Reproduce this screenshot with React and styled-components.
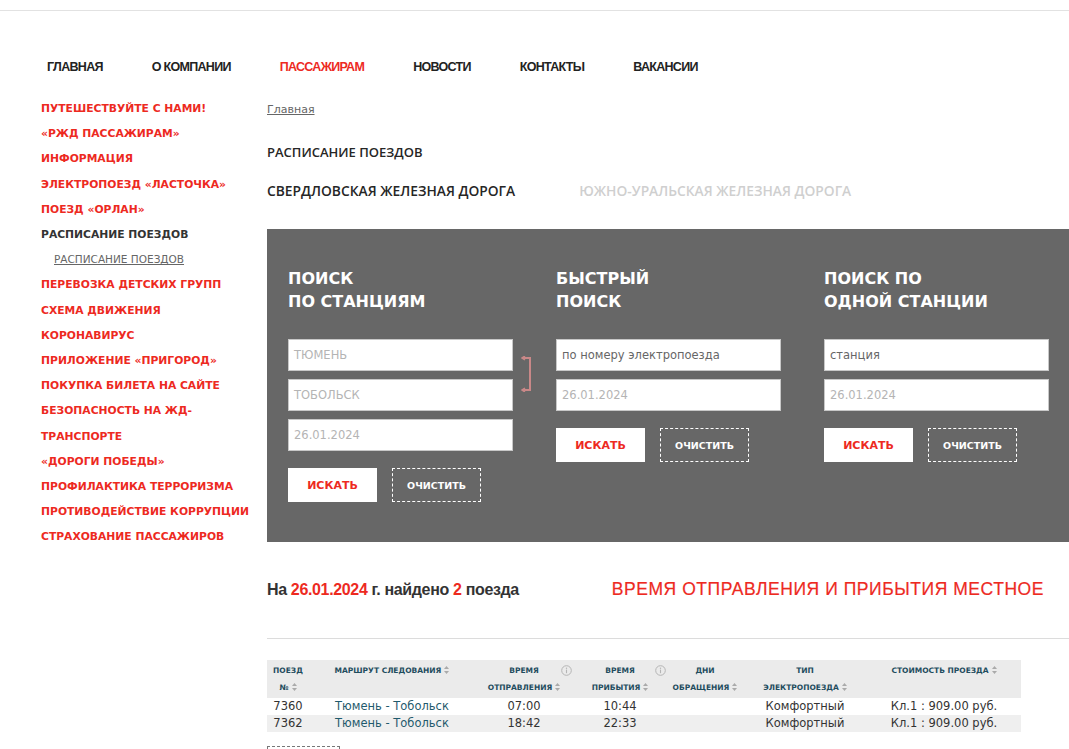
import React from "react";
import styled, { createGlobalStyle } from "styled-components";

const red = "#ed2a1f";
const sans = `"Liberation Sans", Arial, sans-serif`;
const verdana = `"DejaVu Sans", Verdana, sans-serif`;

const GlobalStyle = createGlobalStyle`
  html, body {
    margin: 0;
    padding: 0;
    background: #fff;
    overflow: hidden;
  }
  body {
    font-family: ${verdana};
    color: #333;
  }
`;

const navItems = ["ГЛАВНАЯ", "О КОМПАНИИ", "ПАССАЖИРАМ", "НОВОСТИ", "КОНТАКТЫ", "ВАКАНСИИ"];

const sideItems = [
  { text: "ПУТЕШЕСТВУЙТЕ С НАМИ!" },
  { text: "«РЖД ПАССАЖИРАМ»" },
  { text: "ИНФОРМАЦИЯ" },
  { text: "ЭЛЕКТРОПОЕЗД «ЛАСТОЧКА»" },
  { text: "ПОЕЗД «ОРЛАН»" },
  { text: "РАСПИСАНИЕ ПОЕЗДОВ", current: true },
  { text: "РАСПИСАНИЕ ПОЕЗДОВ", sub: true },
  { text: "ПЕРЕВОЗКА ДЕТСКИХ ГРУПП" },
  { text: "СХЕМА ДВИЖЕНИЯ" },
  { text: "КОРОНАВИРУС" },
  { text: "ПРИЛОЖЕНИЕ «ПРИГОРОД»" },
  { text: "ПОКУПКА БИЛЕТА НА САЙТЕ" },
  { text: "БЕЗОПАСНОСТЬ НА ЖД-" },
  { text: "ТРАНСПОРТЕ" },
  { text: "«ДОРОГИ ПОБЕДЫ»" },
  { text: "ПРОФИЛАКТИКА ТЕРРОРИЗМА" },
  { text: "ПРОТИВОДЕЙСТВИЕ КОРРУПЦИИ" },
  { text: "СТРАХОВАНИЕ ПАССАЖИРОВ" },
];

const trains = [
  { num: "7360", route: "Тюмень - Тобольск", dep: "07:00", arr: "10:44", type: "Комфортный", cost: "Кл.1 : 909.00 руб." },
  { num: "7362", route: "Тюмень - Тобольск", dep: "18:42", arr: "22:33", type: "Комфортный", cost: "Кл.1 : 909.00 руб." },
];

const SortIcon = () => (
  <svg width="5" height="8" viewBox="0 0 5 8" style={{ marginLeft: 3, verticalAlign: "-1px" }}>
    <path d="M2.5 0 L5 3 L0 3 Z" fill="#aaa" />
    <path d="M2.5 8 L5 5 L0 5 Z" fill="#aaa" />
  </svg>
);

const InfoIcon = () => (
  <svg width="11" height="11" viewBox="0 0 11 11">
    <circle cx="5.5" cy="5.5" r="4.8" fill="none" stroke="#b5b5b5" strokeWidth="1" />
    <circle cx="5.5" cy="3.2" r="0.7" fill="#b5b5b5" />
    <path d="M5.5 4.6 V8.2" stroke="#b5b5b5" strokeWidth="1.1" />
  </svg>
);

const SwapIcon = () => (
  <svg width="12" height="36" viewBox="0 0 12 36">
    <path d="M2 2 H9 V34 H2" fill="none" stroke="#c98888" strokeWidth="2" />
    <path d="M4 0 L1 2 L4 4" fill="none" stroke="#c98888" strokeWidth="1.5" />
    <path d="M4 32 L1 34 L4 36" fill="none" stroke="#c98888" strokeWidth="1.5" />
  </svg>
);

const App = () => (
  <>
    <GlobalStyle />
    <TopRule />
    <Nav>
      {navItems.map((n) => (
        <NavLink key={n} active={n === "ПАССАЖИРАМ"}>
          {n}
        </NavLink>
      ))}
    </Nav>
    <Main>
      <Sidebar>
        {sideItems.map((s, i) => (
          <SideLink key={i} current={s.current} sub={s.sub}>
            {s.text}
          </SideLink>
        ))}
      </Sidebar>
      <Content>
        <Breadcrumb>Главная</Breadcrumb>
        <PageTitle>РАСПИСАНИЕ ПОЕЗДОВ</PageTitle>
        <RailTabs>
          <RailTab active>СВЕРДЛОВСКАЯ ЖЕЛЕЗНАЯ ДОРОГА</RailTab>
          <RailTab>ЮЖНО-УРАЛЬСКАЯ ЖЕЛЕЗНАЯ ДОРОГА</RailTab>
        </RailTabs>

        <SearchPanel>
          <SearchColumn>
            <SearchTitle>
              ПОИСК
              <br />
              ПО СТАНЦИЯМ
            </SearchTitle>
            <FieldGroup>
              <Field placeholderLike>ТЮМЕНЬ</Field>
              <Field placeholderLike>ТОБОЛЬСК</Field>
              <Swap>
                <SwapIcon />
              </Swap>
            </FieldGroup>
            <Field placeholderLike>26.01.2024</Field>
            <Buttons>
              <SearchButton>ИСКАТЬ</SearchButton>
              <ClearButton>ОЧИСТИТЬ</ClearButton>
            </Buttons>
          </SearchColumn>
          <SearchColumn>
            <SearchTitle>
              БЫСТРЫЙ
              <br />
              ПОИСК
            </SearchTitle>
            <Field>по номеру электропоезда</Field>
            <Field placeholderLike>26.01.2024</Field>
            <Buttons>
              <SearchButton>ИСКАТЬ</SearchButton>
              <ClearButton>ОЧИСТИТЬ</ClearButton>
            </Buttons>
          </SearchColumn>
          <SearchColumn>
            <SearchTitle>
              ПОИСК ПО
              <br />
              ОДНОЙ СТАНЦИИ
            </SearchTitle>
            <Field>станция</Field>
            <Field placeholderLike>26.01.2024</Field>
            <Buttons>
              <SearchButton>ИСКАТЬ</SearchButton>
              <ClearButton>ОЧИСТИТЬ</ClearButton>
            </Buttons>
          </SearchColumn>
        </SearchPanel>

        <ResultBar>
          <Found>
            На <Hl>26.01.2024</Hl> г. найдено <Hl>2</Hl> поезда
          </Found>
          <LocalTime>ВРЕМЯ ОТПРАВЛЕНИЯ И ПРИБЫТИЯ МЕСТНОЕ</LocalTime>
        </ResultBar>
        <Divider />

        <Table>
          <colgroup>
            <col style={{ width: 42 }} />
            <col style={{ width: 166 }} />
            <col style={{ width: 98 }} />
            <col style={{ width: 94 }} />
            <col style={{ width: 76 }} />
            <col style={{ width: 124 }} />
            <col style={{ width: 154 }} />
          </colgroup>
          <thead>
            <tr>
              <Th>
                <HeadLine>ПОЕЗД</HeadLine>
                <HeadLine>
                  №<SortIcon />
                </HeadLine>
              </Th>
              <Th>
                <HeadLine>
                  МАРШРУТ СЛЕДОВАНИЯ
                  <SortIcon />
                </HeadLine>
                <HeadLine />
              </Th>
              <Th>
                <HeadLine>
                  ВРЕМЯ
                  <Info>
                    <InfoIcon />
                  </Info>
                </HeadLine>
                <HeadLine>
                  ОТПРАВЛЕНИЯ
                  <SortIcon />
                </HeadLine>
              </Th>
              <Th>
                <HeadLine>
                  ВРЕМЯ
                  <Info>
                    <InfoIcon />
                  </Info>
                </HeadLine>
                <HeadLine>
                  ПРИБЫТИЯ
                  <SortIcon />
                </HeadLine>
              </Th>
              <Th>
                <HeadLine>ДНИ</HeadLine>
                <HeadLine>
                  ОБРАЩЕНИЯ
                  <SortIcon />
                </HeadLine>
              </Th>
              <Th>
                <HeadLine>ТИП</HeadLine>
                <HeadLine>
                  ЭЛЕКТРОПОЕЗДА
                  <SortIcon />
                </HeadLine>
              </Th>
              <Th>
                <HeadLine>
                  СТОИМОСТЬ ПРОЕЗДА
                  <SortIcon />
                </HeadLine>
                <HeadLine />
              </Th>
            </tr>
          </thead>
          <tbody>
            {trains.map((t, i) => (
              <Row key={t.num} striped={i % 2 === 1}>
                <Td>{t.num}</Td>
                <Td route>{t.route}</Td>
                <Td>{t.dep}</Td>
                <Td>{t.arr}</Td>
                <Td />
                <Td>{t.type}</Td>
                <Td>{t.cost}</Td>
              </Row>
            ))}
          </tbody>
        </Table>
        <MoreButton />
      </Content>
    </Main>
  </>
);

const TopRule = styled.div`
  height: 10px;
  border-bottom: 1px solid #e2e2e2;
`;

const Nav = styled.nav`
  display: flex;
  gap: 49px;
  padding: 49px 0 0 47px;
  height: 23px;
`;

const NavLink = styled.a`
  font-family: ${sans};
  font-weight: 700;
  font-size: 12.5px;
  letter-spacing: -0.7px;
  line-height: 14px;
  color: ${(p) => (p.active ? red : "#222")};
`;

const Main = styled.div`
  display: grid;
  grid-template-columns: 267px 1fr;
  margin-top: 13px;
`;

const Sidebar = styled.ul`
  list-style: none;
  margin: 0;
  padding: 0 0 0 41px;
`;

const SideLink = styled.li`
  font-family: ${verdana};
  font-size: ${(p) => (p.sub ? "10.5px" : "10.75px")};
  font-weight: ${(p) => (p.sub ? 400 : 700)};
  line-height: 25.2px;
  color: ${(p) => (p.sub ? "#666" : p.current ? "#333" : red)};
  text-decoration: ${(p) => (p.sub ? "underline" : "none")};
  padding-left: ${(p) => (p.sub ? "13px" : "0")};
  white-space: nowrap;
`;

const Content = styled.div`
  min-width: 0;
`;

const Breadcrumb = styled.a`
  display: block;
  margin-top: 1px;
  font-family: ${verdana};
  font-size: 11px;
  line-height: 25px;
  color: #666;
  text-decoration: underline;
`;

const PageTitle = styled.h1`
  margin: 22px 0 0;
  font-family: "Open Sans", sans-serif;
  font-weight: 600;
  font-size: 13px;
  line-height: 16px;
  color: #262626;
`;

const RailTabs = styled.div`
  display: flex;
  gap: 64px;
  margin-top: 23px;
`;

const RailTab = styled.span`
  font-family: "Open Sans", sans-serif;
  font-weight: 600;
  font-size: 13.8px;
  line-height: 16px;
  color: ${(p) => (p.active ? "#262626" : "#cfcfcf")};
`;

const SearchPanel = styled.div`
  display: grid;
  grid-template-columns: repeat(3, 268px);
  margin-top: 30px;
  padding: 38px 0 40px 21px;
  background: #676767;
`;

const SearchColumn = styled.div`
  display: flex;
  flex-direction: column;
  gap: 8px;
  width: 225px;
`;

const SearchTitle = styled.h2`
  margin: 0 0 18px;
  font-family: ${verdana};
  font-weight: 700;
  font-size: 16px;
  line-height: 23px;
  color: #fff;
`;

const FieldGroup = styled.div`
  position: relative;
  display: flex;
  flex-direction: column;
  gap: 8px;
`;

const Swap = styled.span`
  position: absolute;
  right: -20px;
  top: 17px;
`;

const Field = styled.div`
  box-sizing: border-box;
  height: 32px;
  padding: 0 5px;
  background: #fff;
  border: 1px solid #c8c8c8;
  font-family: ${verdana};
  font-size: 11.5px;
  line-height: 30px;
  color: ${(p) => (p.placeholderLike ? "#b4b4b4" : "#666")};
`;

const Buttons = styled.div`
  display: flex;
  gap: 15px;
  margin-top: 9px;
`;

const ButtonBase = styled.button`
  box-sizing: border-box;
  width: 89px;
  height: 34px;
  padding: 0;
  font-family: ${verdana};
  font-weight: 700;
  cursor: pointer;
`;

const SearchButton = styled(ButtonBase)`
  background: #fff;
  border: 0;
  color: ${red};
  font-size: 11px;
`;

const ClearButton = styled(ButtonBase)`
  background: transparent;
  border: 1px dashed #fff;
  color: #fff;
  font-size: 9.5px;
`;

const ResultBar = styled.div`
  display: flex;
  justify-content: space-between;
  align-items: center;
  padding: 36px 25px 0 0;
  height: 23px;
`;

const Found = styled.div`
  font-family: ${sans};
  font-weight: 700;
  font-size: 16px;
  letter-spacing: -0.35px;
  color: #333;
`;

const Hl = styled.span`
  color: ${red};
`;

const LocalTime = styled.div`
  font-family: ${sans};
  font-size: 17.5px;
  letter-spacing: 0.55px;
  color: ${red};
  -webkit-text-stroke: 0.2px ${red};
`;

const Divider = styled.hr`
  margin: 37px 0 0;
  border: 0;
  border-top: 1px solid #dcdcdc;
`;

const Table = styled.table`
  margin-top: 21px;
  width: 754px;
  border-collapse: collapse;
  table-layout: fixed;
`;

const Th = styled.th`
  position: relative;
  padding: 2px 0 2px;
  background: #ebebeb;
  vertical-align: top;
  text-align: center;
`;

const HeadLine = styled.div`
  position: relative;
  height: 17px;
  font-family: ${verdana};
  font-weight: 700;
  font-size: 7.5px;
  line-height: 17px;
  color: #1f4d5e;
  white-space: nowrap;
`;

const Info = styled.span`
  position: absolute;
  right: 1px;
  top: 3px;
  line-height: 0;
`;

const Row = styled.tr`
  background: ${(p) => (p.striped ? "#efefef" : "#fff")};
`;

const Td = styled.td`
  padding: 0;
  height: 17px;
  font-family: ${verdana};
  font-size: 11.5px;
  line-height: 17px;
  text-align: center;
  color: ${(p) => (p.route ? "#1f5a6d" : "#333")};
  white-space: nowrap;
`;

const MoreButton = styled.div`
  margin-top: 14px;
  width: 71px;
  height: 30px;
  border: 1px dashed #777;
`;

export default App;
